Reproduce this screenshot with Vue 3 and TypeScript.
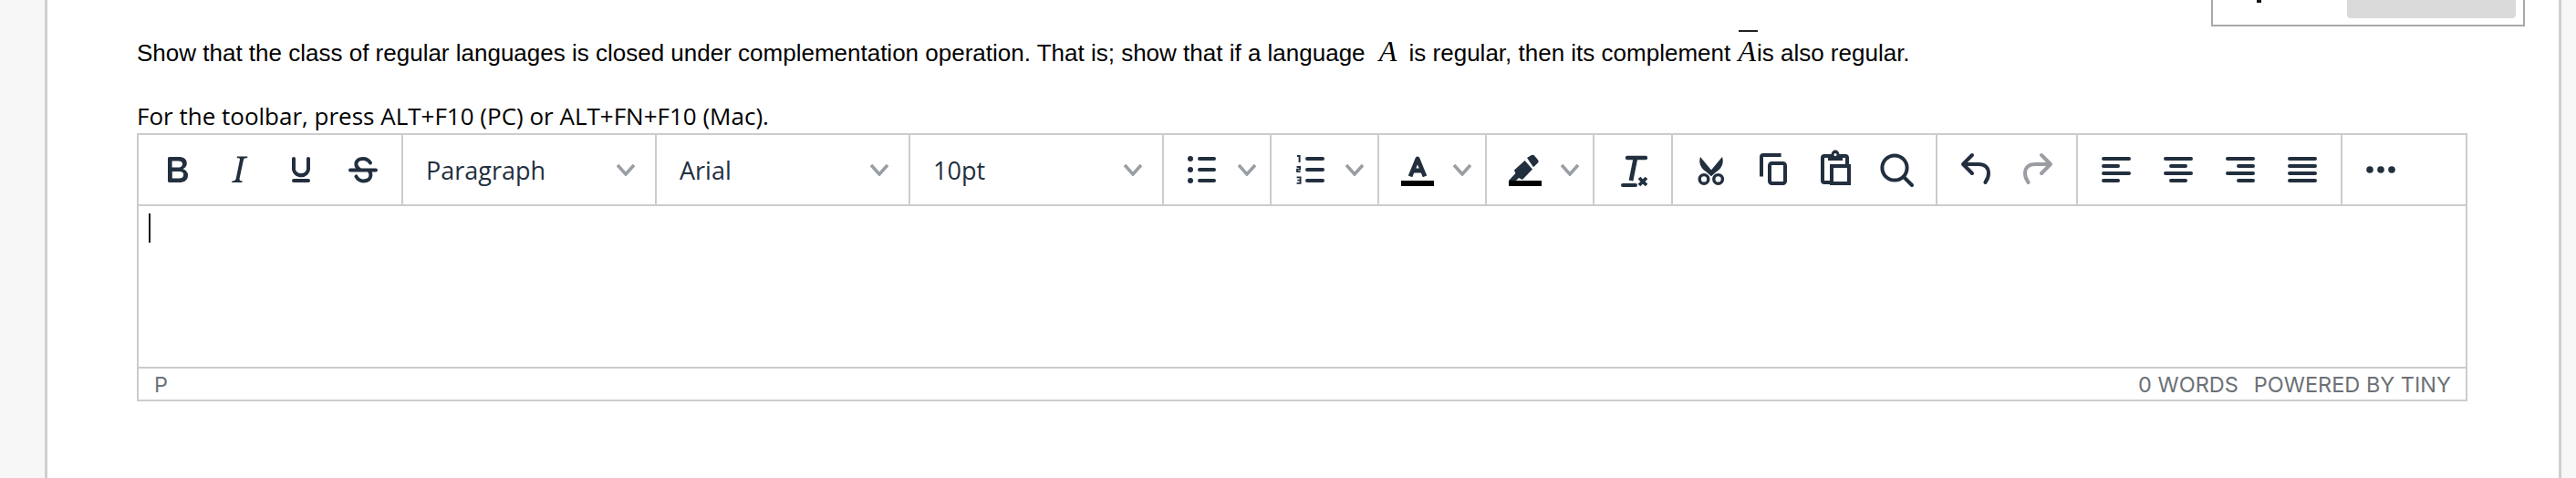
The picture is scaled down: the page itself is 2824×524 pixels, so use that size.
<script setup lang="ts">
interface ToolButton {
  name: string
  muted?: boolean
}

const formatButtons: ToolButton[] = [{ name: 'bold' }, { name: 'italic' }, { name: 'underline' }, { name: 'strike' }]
const selects = ['Paragraph', 'Arial', '10pt']
const splitButtons = ['bullist', 'numlist', 'forecolor', 'highlight']
const clipboardButtons: ToolButton[] = [{ name: 'cut' }, { name: 'copy' }, { name: 'paste' }, { name: 'search' }]
const historyButtons: ToolButton[] = [{ name: 'undo' }, { name: 'redo', muted: true }]
const alignButtons: ToolButton[] = [{ name: 'left' }, { name: 'center' }, { name: 'right' }, { name: 'justify' }]
</script>

<template>
  <div class="page">
    <aside class="gutter"></aside>
    <main class="content">
      <div class="top-row">
        <div class="cropped-box">
          <span class="dot"></span>
          <span class="grey-button"></span>
        </div>
      </div>

      <p class="question">
        Show that the class of regular languages is closed under complementation operation. That is; show that if a
        language <i class="math">A</i> is regular, then its complement <i class="math bar">A</i>is also regular.
      </p>

      <p class="hint">For the toolbar, press ALT+F10 (PC) or ALT+FN+F10 (Mac).</p>

      <section class="editor">
        <div class="toolbar">
          <div class="group">
            <button v-for="b in formatButtons" :key="b.name" class="btn">
              <svg viewBox="0 0 24 24" class="icon">
                <path
                  v-if="b.name === 'bold'"
                  class="fill"
                  d="M7.8 19c-.3 0-.5 0-.6-.2l-.2-.5V5.700c0-.2 0-.4.2-.5l.6-.2h5c1.500 0 2.700.3 3.500 1 .7.6 1.100 1.400 1.100 2.500a3 3 0 0 1-.6 1.900c-.4.6-1 1-1.600 1.200.4.1.9.3 1.300.6s.8.7 1 1.200c.4.4.5 1 .5 1.600 0 1.300-.4 2.300-1.300 3-.8.7-2.100 1-3.800 1H7.800zm5-8.300c.6 0 1.200-.1 1.600-.5.4-.3.6-.7.6-1.300 0-1.100-.8-1.700-2.300-1.700H9.300v3.500h3.400zm.5 6c.7 0 1.300-.1 1.700-.4.4-.4.6-.9.6-1.500s-.2-1-.7-1.400c-.4-.3-1-.4-2-.4H9.400v3.800h4z"
                />
                <path
                  v-else-if="b.name === 'italic'"
                  class="fill"
                  d="M16.700 4.700l-.1.9h-.3c-.6 0-1 0-1.400.3-.3.3-.4.6-.5 1.100l-2.100 9.800v.6c0 .5.4.8 1.400.8h.2l-.2.8H8l.2-.8h.2c1.100 0 1.800-.5 2-1.500l2-9.800.1-.5c0-.6-.4-.8-1.400-.8h-.3l.2-.9h5.800z"
                />
                <path
                  v-else-if="b.name === 'underline'"
                  class="fill"
                  d="M16 5c.6 0 1 .4 1 1v5.500a4 4 0 0 1-.4 1.800l-1 1.400a5.300 5.300 0 0 1-5.500 1 5 5 0 0 1-1.600-1c-.5-.4-.8-.9-1.100-1.400a4 4 0 0 1-.4-1.800V6c0-.6.4-1 1-1s1 .4 1 1v5.500c0 .3 0 .6.2 1l.6.7a3.300 3.300 0 0 0 2.200.8 3.400 3.400 0 0 0 2.200-.8c.3-.2.4-.5.6-.8l.2-.9V6c0-.6.4-1 1-1zM8 17h8c.6 0 1 .4 1 1s-.4 1-1 1H8a1 1 0 0 1 0-2z"
                />
                <template v-else>
                  <path
                    d="M16 8.300C15.200 6.900 13.900 6 12 6 9.600 6 8.200 7.200 8.200 9c0 1.200.6 2 1.700 2.700M8.200 15.700C9 17.200 10.300 18.200 12.200 18.200c2.500 0 4-1.300 4-3.200 0-.9-.2-1.600-.7-2.200"
                    fill="none"
                    stroke-width="2"
                    stroke-linecap="round"
                  />
                  <path d="M5 12.300h14" fill="none" stroke-width="2" stroke-linecap="round" />
                </template>
              </svg>
            </button>
          </div>

          <div v-for="s in selects" :key="s" class="group">
            <button class="select">
              <span>{{ s }}</span>
              <svg viewBox="0 0 22 14" class="chevron"><path d="M2 2l9 10 9-10" /></svg>
            </button>
          </div>

          <div v-for="s in splitButtons" :key="s" class="group">
            <button class="btn">
              <svg viewBox="0 0 24 24" class="icon">
                <template v-if="s === 'bullist'">
                  <circle cx="5.500" cy="6" r="1.500" class="fill" />
                  <circle cx="5.500" cy="12" r="1.500" class="fill" />
                  <circle cx="5.500" cy="18" r="1.500" class="fill" />
                  <path d="M10.500 6h8M10.500 12h8M10.500 18h8" fill="none" stroke-width="2" stroke-linecap="round" />
                </template>
                <template v-else-if="s === 'numlist'">
                  <path d="M5 4.500h1.300v3.500" fill="none" stroke-width="1" />
                  <path d="M4.800 10.500h1.800v1.300H5v1.300h1.800" fill="none" stroke-width=".9" />
                  <path d="M4.800 16.200h2v3.200h-2M5.200 17.800h1.500" fill="none" stroke-width=".9" />
                  <path d="M10.500 6h8.500M10.500 12h8.500M10.500 18h8.500" fill="none" stroke-width="2" stroke-linecap="round" />
                </template>
                <template v-else-if="s === 'forecolor'">
                  <path d="M8 15.700 12 6l4 9.700M9.300 12.500h5.400" fill="none" stroke-width="2.400" stroke-linejoin="round" />
                  <rect x="3" y="18" width="18" height="3" class="black" />
                </template>
                <template v-else>
                  <path
                    class="fill"
                    d="M13 5.500 15.500 4a1.300 1.300 0 0 1 1.500.3l2 2.300a1.200 1.200 0 0 1 0 1.600l-2.500 2.400zM11.800 7 16 11.800l-5.500 5.700-2-1-1.500 1.500H3l3.700-4-.7-1.700z"
                  />
                  <rect x="3" y="18" width="18" height="3" class="black" />
                </template>
              </svg>
            </button>
            <span class="split-arrow">
              <svg viewBox="0 0 22 14" class="chevron"><path d="M2 2l9 10 9-10" /></svg>
            </span>
          </div>

          <div class="group">
            <button class="btn">
              <svg viewBox="0 0 24 24" class="icon">
                <path d="M9 5.500h10" fill="none" stroke-width="2.200" stroke-linecap="round" />
                <path d="M13.500 5.500 11 18" fill="none" stroke-width="2.400" />
                <path d="M6.500 20.500h7" fill="none" stroke-width="2" stroke-linecap="round" />
                <path d="M15.500 16.500l4 4M19.500 16.500l-4 4" fill="none" stroke-width="1.900" />
              </svg>
            </button>
          </div>

          <div class="group">
            <button v-for="b in clipboardButtons" :key="b.name" class="btn">
              <svg viewBox="0 0 24 24" class="icon">
                <template v-if="b.name === 'cut'">
                  <path class="fill" d="M6 5l7.500 9-1.500 1.500-3-2.500C6 11 5 8 6 5z" />
                  <path class="fill" d="M18 5l-7.500 9 1.500 1.500 3-2.500c3-2 4-5 3-8z" />
                  <circle cx="8" cy="17.200" r="2.400" fill="none" stroke-width="1.700" />
                  <circle cx="15.800" cy="17.200" r="2.400" fill="none" stroke-width="1.700" />
                </template>
                <template v-else-if="b.name === 'copy'">
                  <path d="M16.300 4H6.500a1 1 0 0 0-1 1v10.700" fill="none" stroke-width="2" />
                  <rect x="10" y="8.500" width="8.500" height="11" rx="1.200" fill="none" stroke-width="2" />
                </template>
                <template v-else-if="b.name === 'paste'">
                  <path
                    d="M8.500 4.500H6a1 1 0 0 0-1 1v12.500a1 1 0 0 0 1 1h3M15 4.500h2.500a1 1 0 0 1 1 1V9"
                    fill="none"
                    stroke-width="2"
                  />
                  <path class="fill" d="M8 3.500h1.800a2.200 2.200 0 0 1 4.400 0H16V7H8z" />
                  <circle cx="12" cy="3.800" r=".8" class="hole" />
                  <rect x="10" y="10" width="9.500" height="9.500" class="sheet" stroke-width="2" />
                </template>
                <template v-else>
                  <circle cx="10.500" cy="11" r="6.800" fill="none" stroke-width="2" />
                  <path d="M15.500 16l4.500 4.500" fill="none" stroke-width="2" stroke-linecap="round" />
                </template>
              </svg>
            </button>
          </div>

          <div class="group">
            <button v-for="b in historyButtons" :key="b.name" class="btn" :class="{ muted: b.muted }">
              <svg viewBox="0 0 24 24" class="icon">
                <path
                  v-if="b.name === 'undo'"
                  d="M10 4 5 9l5 5M5.500 9h8c3.500 0 5.500 2 5.500 5 0 2-.7 3.500-1.800 5"
                  fill="none"
                  stroke-width="2"
                  stroke-linecap="round"
                  stroke-linejoin="round"
                />
                <path
                  v-else
                  d="M14 4l5 5-5 5M18.500 9h-8C7 9 5 11 5 14c0 2 .7 3.500 1.800 5"
                  fill="none"
                  stroke-width="2"
                  stroke-linecap="round"
                  stroke-linejoin="round"
                />
              </svg>
            </button>
          </div>

          <div class="group">
            <button v-for="b in alignButtons" :key="b.name" class="btn">
              <svg viewBox="0 0 24 24" class="icon">
                <path
                  v-if="b.name === 'left'"
                  d="M5 6h14M5 10h8M5 14h14M5 18h8"
                  fill="none"
                  stroke-width="2"
                  stroke-linecap="round"
                />
                <path
                  v-else-if="b.name === 'center'"
                  d="M5 6h14M8 10h8M5 14h14M8 18h8"
                  fill="none"
                  stroke-width="2"
                  stroke-linecap="round"
                />
                <path
                  v-else-if="b.name === 'right'"
                  d="M5 6h14M11 10h8M5 14h14M11 18h8"
                  fill="none"
                  stroke-width="2"
                  stroke-linecap="round"
                />
                <path v-else d="M5 6h14M5 10h14M5 14h14M5 18h14" fill="none" stroke-width="2" stroke-linecap="round" />
              </svg>
            </button>
          </div>

          <div class="group last">
            <button class="btn">
              <svg viewBox="0 0 24 24" class="icon">
                <circle cx="6" cy="12" r="1.900" class="fill" />
                <circle cx="12" cy="12" r="1.900" class="fill" />
                <circle cx="18" cy="12" r="1.900" class="fill" />
              </svg>
            </button>
          </div>
        </div>

        <div class="body-area"><span class="caret"></span></div>

        <div class="statusbar">
          <span>P</span>
          <div class="status-right">
            <span>0 WORDS</span>
            <span>POWERED BY TINY</span>
          </div>
        </div>
      </section>
    </main>
    <aside class="gutter right"></aside>
  </div>
</template>

<style scoped>
.page {
  display: flex;
  width: 2824px;
  height: 524px;
  background: #fff;
  overflow: hidden;
}

.gutter {
  width: 49px;
  flex: none;
  background: #f7f7f7;
  border-right: 3px solid #cfcfcf;
}

.gutter.right {
  width: 16px;
  border-right: none;
  border-left: 3px solid #cfcfcf;
}

.content {
  flex: 1;
  min-width: 0;
  padding-left: 98px;
}

.top-row {
  display: flex;
  justify-content: flex-end;
  height: 29px;
  padding-right: 37px;
}

.cropped-box {
  display: flex;
  justify-content: space-between;
  width: 344px;
  height: 29px;
  box-sizing: border-box;
  border: 2px solid #a9a9a9;
  border-top: none;
  padding: 0 8px 7px 48px;
}

.dot {
  width: 5px;
  height: 3px;
  background: #111;
}

.grey-button {
  width: 185px;
  background: #dadada;
  border-radius: 0 0 4px 4px;
}

.question {
  margin: 11px 0 0;
  height: 32px;
  font-family: 'Liberation Sans', Arial, sans-serif;
  font-size: 26px;
  line-height: 32px;
  color: #000;
  white-space: nowrap;
}

.math {
  font-family: 'Liberation Serif', 'Times New Roman', serif;
  font-size: 32px;
  margin: 0 6px 0 8px;
}

.math.bar {
  position: relative;
  margin: 0 1px 0 1px;
}

.math.bar::before {
  content: '';
  position: absolute;
  left: 1px;
  right: -2px;
  top: -5px;
  height: 2px;
  background: #222;
}

.hint {
  margin: 39px 0 0;
  height: 32px;
  font-family: 'Open Sans', sans-serif;
  font-size: 26px;
  line-height: 32px;
  color: #000;
  white-space: nowrap;
}

.editor {
  width: 2555px;
  margin-top: 3px;
  border: 2px solid #ccc;
  box-sizing: border-box;
}

.toolbar {
  display: flex;
  height: 76px;
  border-bottom: 2px solid #ccc;
}

.group {
  display: flex;
  align-items: center;
  padding: 0 8px;
  border-right: 2px solid #ccc;
}

.group.last {
  border-right: none;
}

.btn {
  width: 68px;
  height: 68px;
  display: flex;
  align-items: center;
  justify-content: center;
  padding: 0;
  border: none;
  background: none;
}

.icon {
  width: 48px;
  height: 48px;
  stroke: #222f3e;
  fill: none;
}

.btn.muted .icon {
  stroke: #9a9ea3;
}

.icon .fill {
  fill: #222f3e;
  stroke: none;
}

.icon .black {
  fill: #000;
  stroke: none;
}

.icon .hole {
  fill: #fff;
  stroke: none;
}

.icon .sheet {
  fill: #fff;
}

.select {
  width: 260px;
  height: 68px;
  display: flex;
  align-items: center;
  justify-content: space-between;
  padding: 0 13px 0 17px;
  border: none;
  background: none;
  font-family: 'Open Sans', sans-serif;
  font-size: 27px;
  color: #222f3e;
}

.chevron {
  width: 22px;
  height: 14px;
  fill: none;
  stroke: #999ea4;
  stroke-width: 3.5;
}

.split-arrow {
  width: 32px;
  height: 68px;
  display: flex;
  align-items: center;
  justify-content: center;
  padding-right: 2px;
  box-sizing: border-box;
}

.body-area {
  height: 178px;
  padding: 8px 0 0 11px;
  box-sizing: border-box;
  border-bottom: 2px solid #ccc;
}

.caret {
  display: block;
  width: 2px;
  height: 32px;
  background: #111;
}

.statusbar {
  display: flex;
  justify-content: space-between;
  align-items: center;
  height: 34px;
  padding: 0 16px 0 17px;
  font-family: Inter, sans-serif;
  font-size: 23.500px;
  color: #6c7177;
}

.status-right {
  display: flex;
  gap: 17px;
}
</style>

<style>
html,
body {
  margin: 0;
  background: #fff;
}
</style>
